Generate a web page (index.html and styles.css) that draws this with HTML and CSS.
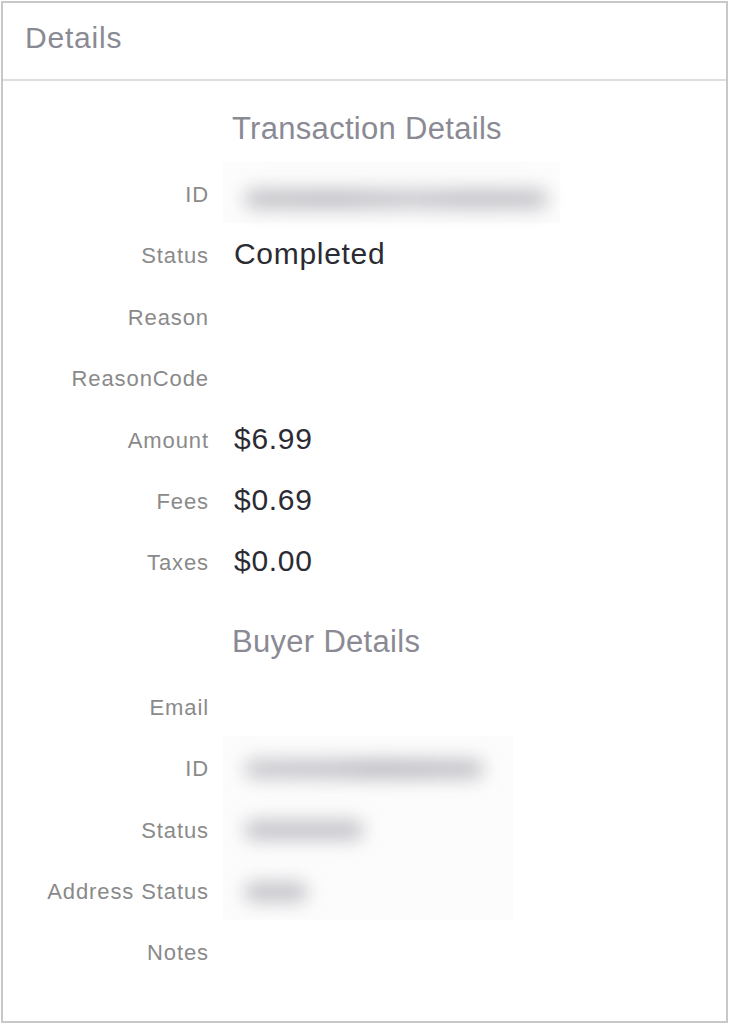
FILE: index.html
```html
<!DOCTYPE html>
<html>

<head>
    <meta charset="UTF-8">
    <title>Details</title>
    <link rel="stylesheet" href="styles.css">
</head>

<body>
    <div class="panel">
        <div class="panel-title">Details</div>
        <div class="panel-body">
            <div class="section">
                <div class="section-title">Transaction Details</div>
                <div class="fields">
                    <span class="label">ID</span>
                    <span class="value masked masked-wide"><span class="bar bar-txn"></span></span>
                    <span class="label">Status</span>
                    <span class="value">Completed</span>
                    <span class="label">Reason</span>
                    <span class="value"></span>
                    <span class="label">ReasonCode</span>
                    <span class="value"></span>
                    <span class="label">Amount</span>
                    <span class="value">$6.99</span>
                    <span class="label">Fees</span>
                    <span class="value">$0.69</span>
                    <span class="label">Taxes</span>
                    <span class="value">$0.00</span>
                </div>
            </div>
            <div class="section section-buyer">
                <div class="section-title">Buyer Details</div>
                <div class="fields">
                    <span class="label">Email</span>
                    <span class="value"></span>
                    <span class="label">ID</span>
                    <span class="value masked"><span class="bar bar-id"></span></span>
                    <span class="label">Status</span>
                    <span class="value masked"><span class="bar bar-status"></span></span>
                    <span class="label">Address Status</span>
                    <span class="value masked"><span class="bar bar-address"></span></span>
                    <span class="label">Notes</span>
                    <span class="value"></span>
                </div>
            </div>
        </div>
    </div>
</body>

</html>
```

FILE: styles.css
```css
body {
    margin: 0;
    padding: 0;
    font-family: "Liberation Sans", Arial, sans-serif;
    background-color: #fff;
}

.panel {
    width: 727px;
    height: 1022px;
    margin: 1px;
    border: 2px solid #c8c8c8;
    box-sizing: border-box;
}

.panel-title {
    padding: 17px 0 23px 22px;
    font-size: 30px;
    line-height: 36px;
    letter-spacing: 0.8px;
    color: #8a8a94;
    border-bottom: 2px solid #dedede;
}

.panel-body {
    padding-top: 28px;
}

.section-buyer {
    margin-top: 30px;
}

.section-title {
    padding-left: 229px;
    margin-bottom: 13px;
    font-size: 31px;
    line-height: 40px;
    letter-spacing: 0.3px;
    color: #8a8a94;
}

.fields {
    display: grid;
    grid-template-columns: 206px 1fr;
    grid-auto-rows: 61.4px;
    column-gap: 25px;
}

.fields .label {
    text-align: right;
    white-space: nowrap;
    font-size: 22px;
    line-height: 65px;
    letter-spacing: 0.9px;
    color: #8a8a8a;
}

.fields .value {
    font-size: 30px;
    line-height: 61.4px;
    letter-spacing: 0.7px;
    color: #2b2b33;
}

/* hidden values, shown blurred */
.fields .masked {
    display: block;
    width: 279px;
    margin-left: -11px;
    padding-left: 11px;
    background-color: #fcfcfc;
}

.fields .masked-wide {
    width: 326px;
}

.bar {
    display: block;
    height: 20px;
    margin-left: 10px;
    border-radius: 10px;
    background-color: #c4c4ca;
    filter: blur(9px);
}

.bar-txn {
    width: 304px;
    margin-top: 27px;
    background: linear-gradient(to right, #c6c6cb 0%, #c0c0c6 30%, #cbcbd0 55%, #c2c2c8 75%, #c6c6cb 100%);
}

.bar-id {
    width: 240px;
    margin-top: 23px;
    background: linear-gradient(to right, #cacacf 0%, #c4c4ca 40%, #bcbcc3 55%, #c6c6cb 100%);
}

.bar-status {
    width: 120px;
    margin-top: 22px;
}

.bar-address {
    width: 64px;
    margin-top: 23px;
}
```
